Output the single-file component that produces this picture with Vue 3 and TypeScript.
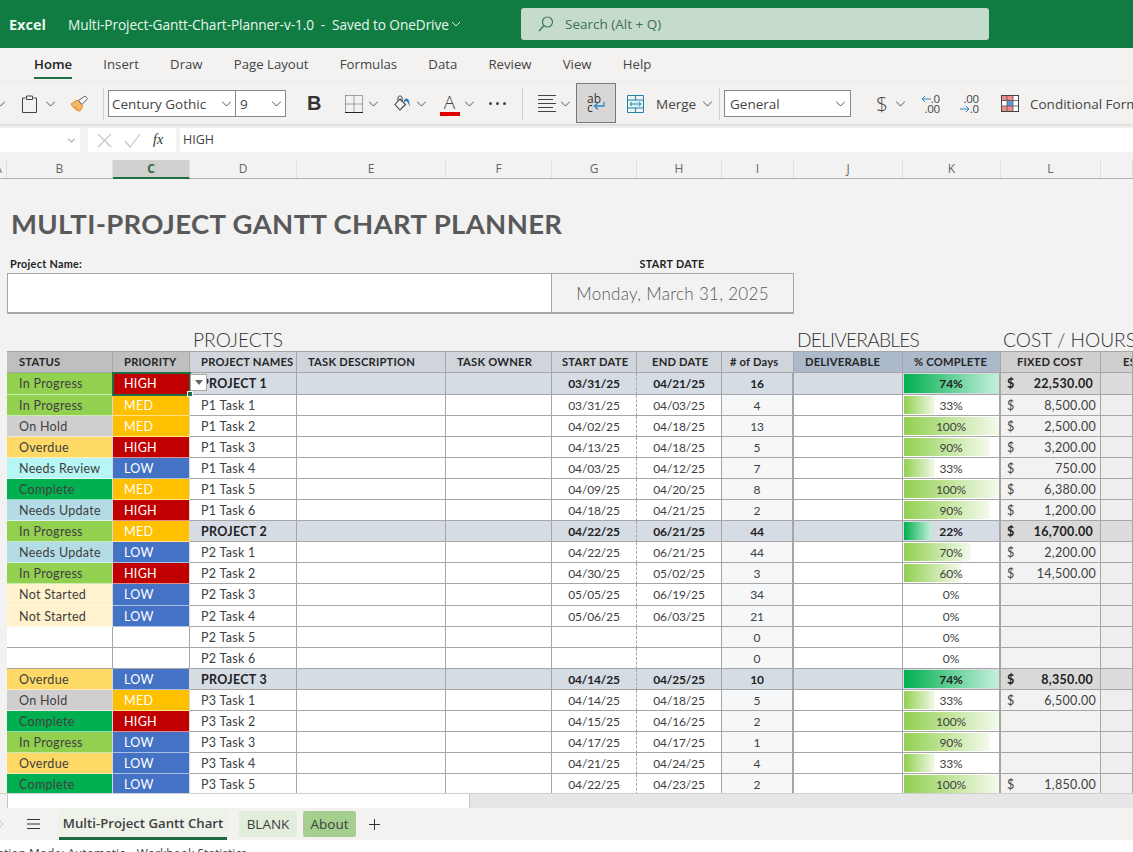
<script setup lang="ts">
interface Row {
  status: string
  priority: string
  name: string
  start: string
  end: string
  days: string
  pct: number
  cost: string
  project?: boolean
}

const r = (
  status: string,
  priority: string,
  name: string,
  start: string,
  end: string,
  days: string,
  pct: number,
  cost: string,
  project = false,
): Row => ({ status, priority, name, start, end, days, pct, cost, project })

const rows: Row[] = [
  r('In Progress', 'HIGH', 'PROJECT 1', '03/31/25', '04/21/25', '16', 74, '22,530.00', true),
  r('In Progress', 'MED', 'P1 Task 1', '03/31/25', '04/03/25', '4', 33, '8,500.00'),
  r('On Hold', 'MED', 'P1 Task 2', '04/02/25', '04/18/25', '13', 100, '2,500.00'),
  r('Overdue', 'HIGH', 'P1 Task 3', '04/13/25', '04/18/25', '5', 90, '3,200.00'),
  r('Needs Review', 'LOW', 'P1 Task 4', '04/03/25', '04/12/25', '7', 33, '750.00'),
  r('Complete', 'MED', 'P1 Task 5', '04/09/25', '04/20/25', '8', 100, '6,380.00'),
  r('Needs Update', 'HIGH', 'P1 Task 6', '04/18/25', '04/21/25', '2', 90, '1,200.00'),
  r('In Progress', 'MED', 'PROJECT 2', '04/22/25', '06/21/25', '44', 22, '16,700.00', true),
  r('Needs Update', 'LOW', 'P2 Task 1', '04/22/25', '06/21/25', '44', 70, '2,200.00'),
  r('In Progress', 'HIGH', 'P2 Task 2', '04/30/25', '05/02/25', '3', 60, '14,500.00'),
  r('Not Started', 'LOW', 'P2 Task 3', '05/05/25', '06/19/25', '34', 0, ''),
  r('Not Started', 'LOW', 'P2 Task 4', '05/06/25', '06/03/25', '21', 0, ''),
  r('', '', 'P2 Task 5', '', '', '0', 0, ''),
  r('', '', 'P2 Task 6', '', '', '0', 0, ''),
  r('Overdue', 'LOW', 'PROJECT 3', '04/14/25', '04/25/25', '10', 74, '8,350.00', true),
  r('On Hold', 'MED', 'P3 Task 1', '04/14/25', '04/18/25', '5', 33, '6,500.00'),
  r('Complete', 'HIGH', 'P3 Task 2', '04/15/25', '04/16/25', '2', 100, ''),
  r('In Progress', 'LOW', 'P3 Task 3', '04/17/25', '04/17/25', '1', 90, ''),
  r('Overdue', 'LOW', 'P3 Task 4', '04/21/25', '04/24/25', '4', 33, ''),
  r('Complete', 'LOW', 'P3 Task 5', '04/22/25', '04/23/25', '2', 100, '1,850.00'),
]

const statusClass = (s: string) => (s ? 's-' + s.toLowerCase().replace(/\s+/g, '-') + ' filled' : '')
const prioClass = (p: string) => (p ? 'p-' + p.toLowerCase() + ' filled' : '')
const barSize = (row: Row) => {
  const w = row.project ? (row.pct === 22 ? 28 : 97) : row.pct * 0.97
  return { backgroundSize: `${w}% calc(100% - 3px)` }
}

const ribbon = ['Home', 'Insert', 'Draw', 'Page Layout', 'Formulas', 'Data', 'Review', 'View', 'Help']
const letters = ['B', 'C', 'D', 'E', 'F', 'G', 'H', 'I', 'J', 'K', 'L', '']
</script>

<template>
  <div class="app">
    <header class="titlebar">
      <span class="brand">Excel</span>
      <span class="file">Multi-Project-Gantt-Chart-Planner-v-1.0&nbsp; - &nbsp;Saved to OneDrive</span>
      <svg class="file-chev" width="10" height="6" viewBox="0 0 10 6"><path d="M1 1l4 4 4-4" fill="none" stroke="#dff0e6" stroke-width="1"/></svg>
      <div class="search">
        <svg width="18" height="18" viewBox="0 0 18 18"><circle cx="10.5" cy="7" r="5" fill="none" stroke="#3f7a58" stroke-width="1.2"/><path d="M7 10.5L2 16" stroke="#3f7a58" stroke-width="1.4"/></svg>
        <span>Search (Alt + Q)</span>
      </div>
    </header>

    <nav class="ribbon-tabs">
      <span v-for="t in ribbon" :key="t" class="rtab" :class="{ on: t === 'Home' }">{{ t }}</span>
    </nav>

    <div class="toolbar">
      <svg class="chev c-first" width="9" height="6" viewBox="0 0 9 6"><path d="M0 .5l4.500 4.500L9 .5" /></svg>
      <svg class="i-paste" width="16" height="18" viewBox="0 0 16 18"><path d="M3.500 3H.5v14.500h14V3H11.500M4.500 1h6v3.500h-6z" fill="none" stroke="#444" stroke-width="1"/></svg>
      <svg class="chev c-paste" width="9" height="6" viewBox="0 0 9 6"><path d="M0 .5l4.500 4.500L9 .5" /></svg>
      <svg class="i-brush" width="19" height="18" viewBox="0 0 19 18"><path d="M1 9l6-4 6 6-3 5c-3 0-7-3-9-7z" fill="#f4b766" stroke="#e08f2f"/><path d="M8.500 5.500l3.500 4 5.500-6-2.500-2.500z" fill="#f7f7f7" stroke="#666"/><path d="M5 11l3 4" stroke="#e08f2f"/></svg>
      <span class="sep s1"></span>
      <div class="combo font"><span class="combo-a">Century Gothic<svg class="chev" width="9" height="6" viewBox="0 0 9 6"><path d="M0 .5l4.500 4.500L9 .5" /></svg></span><span class="combo-b">9<svg class="chev" width="9" height="6" viewBox="0 0 9 6"><path d="M0 .5l4.500 4.500L9 .5" /></svg></span></div>
      <b class="bold">B</b>
      <svg class="i-borders" width="18" height="18" viewBox="0 0 18 18"><path d="M.5.5h17v17M.5.500v17M9 .5v17M.5 9h17" fill="none" stroke="#555" stroke-dasharray="1 1"/><path d="M0 17.500h18" stroke="#222"/></svg>
      <svg class="chev c-b" width="9" height="6" viewBox="0 0 9 6"><path d="M0 .5l4.500 4.500L9 .5" /></svg>
      <svg class="i-fill" width="17" height="17" viewBox="0 0 17 17"><path d="M6 4L1 9.500 6 15l5.500-5.500z" fill="none" stroke="#444" stroke-width="1.100"/><path d="M4 6V2.500C4 .5 8 .5 8 2.500V7" fill="none" stroke="#444"/><path d="M10 5c2-2 4-2 5 1l1 6-2-4c-1-2-2-2-4-1z" fill="#2b7cb8"/></svg>
      <svg class="chev c-f" width="9" height="6" viewBox="0 0 9 6"><path d="M0 .5l4.500 4.500L9 .5" /></svg>
      <span class="font-a"><span>A</span><i></i></span>
      <svg class="chev c-a" width="9" height="6" viewBox="0 0 9 6"><path d="M0 .5l4.500 4.500L9 .5" /></svg>
      <span class="dots"><i></i><i></i><i></i></span>
      <span class="sep s2"></span>
      <svg class="i-align" width="18" height="18" viewBox="0 0 18 18"><path d="M0 .5h18M0 4.500h15M0 8.500h18M0 12.500h15M0 16.500h18" fill="none" stroke="#444" stroke-width="1"/></svg>
      <svg class="chev c-al" width="9" height="6" viewBox="0 0 9 6"><path d="M0 .5l4.500 4.500L9 .5" /></svg>
      <div class="wrap-btn"><span class="abc">ab<br>c</span><svg width="12" height="9" viewBox="0 0 12 9"><path d="M11 0v4H2M5 1L1.500 4 5 7.500" fill="none" stroke="#2b88c8" stroke-width="1.300"/></svg></div>
      <svg class="i-merge" width="17" height="18" viewBox="0 0 17 18"><rect x=".5" y="5" width="16" height="8" fill="#dff1f6"/><path d="M.5.5h16v17H.5zM.5 5h16M.5 13h16M8.500.5V5M8.500 13v4.500" fill="none" stroke="#1e86a5"/><path d="M3 9h11M5 7L3 9l2 2M12 7l2 2-2 2" fill="none" stroke="#1e86a5"/></svg>
      <span class="merge">Merge</span>
      <svg class="chev c-m" width="9" height="6" viewBox="0 0 9 6"><path d="M0 .5l4.500 4.500L9 .5" /></svg>
      <span class="sep s3"></span>
      <div class="combo general"><span>General</span><svg class="chev" width="9" height="6" viewBox="0 0 9 6"><path d="M0 .5l4.500 4.500L9 .5" /></svg></div>
      <span class="dollar">$</span>
      <svg class="chev c-d" width="9" height="6" viewBox="0 0 9 6"><path d="M0 .5l4.500 4.500L9 .5" /></svg>
      <span class="dec d1"><span><svg width="10" height="8" viewBox="0 0 10 8"><path d="M10 4H1M4 1L1 4l3 3" fill="none" stroke="#2b88c8"/></svg>.0</span><span>.00</span></span>
      <span class="dec d2"><span>.00</span><span><svg width="10" height="8" viewBox="0 0 10 8"><path d="M0 4h9M6 1l3 3-3 3" fill="none" stroke="#2b88c8"/></svg>.0</span></span>
      <svg class="i-cond" width="18" height="17" viewBox="0 0 18 17"><rect x=".5" y=".5" width="17" height="16" fill="#fff" stroke="#444"/><rect x="1" y="1" width="11" height="5" fill="#f08a8a"/><rect x="6" y="6" width="6" height="5" fill="#5b9bd5"/><rect x="6" y="11" width="6" height="5" fill="#f08a8a"/><rect x="1" y="11" width="5" height="5" fill="#f08a8a"/><path d="M6 .5v16M12 .5v16M.5 5.500h17M.5 11h17" stroke="#555" stroke-width=".8" fill="none"/></svg>
      <span class="cond">Conditional Formatting</span>
    </div>

    <div class="formula">
      <div class="namebox"><svg class="chev" width="7" height="5" viewBox="0 0 9 6"><path d="M0 .5l4.500 4.500L9 .5" /></svg></div>
      <div class="fxbox">
        <svg width="15" height="15" viewBox="0 0 15 15"><path d="M1 1l13 13M14 1L1 14" stroke="#c8c6c4" stroke-width="1.200"/></svg>
        <svg width="17" height="15" viewBox="0 0 17 15"><path d="M1 8l5 6L16 1" fill="none" stroke="#c8c6c4" stroke-width="1.200"/></svg>
        <em>fx</em>
      </div>
      <div class="fbar">HIGH</div>
    </div>

    <div class="col-heads">
      <span class="corner">A</span>
      <span class="grid-cols letters">
        <span v-for="(l, i) in letters" :key="i" class="lt" :class="{ sel: l === 'C' }">{{ l }}</span>
      </span>
    </div>

    <main class="sheet">
      <h1 class="title">MULTI-PROJECT GANTT CHART PLANNER</h1>
      <div class="labels">
        <b>Project Name:</b>
        <b class="sd">START DATE</b>
      </div>
      <div class="projbox">
        <div class="pname"></div>
        <div class="pdate">Monday, March 31, 2025</div>
      </div>
      <div class="grid-cols sections">
        <span class="sec sec-a">PROJECTS</span>
        <span class="sec sec-b">DELIVERABLES</span>
        <span class="sec sec-c">COST / HOURS</span>
      </div>
      <div class="grid-cols head">
        <span class="hd gray pl12">STATUS</span>
        <span class="hd gray">PRIORITY</span>
        <span class="hd slate">PROJECT NAMES</span>
        <span class="hd slate">TASK DESCRIPTION</span>
        <span class="hd slate">TASK OWNER</span>
        <span class="hd slate pl10">START DATE</span>
        <span class="hd slate pl15">END DATE</span>
        <span class="hd slate pl8"># of Days</span>
        <span class="hd blue">DELIVERABLE</span>
        <span class="hd blue">% COMPLETE</span>
        <span class="hd lightgray pl16">FIXED COST</span>
        <span class="hd lightgray est">ESTIMATED</span>
      </div>
      <div v-for="(row, i) in rows" :key="i" class="grid-cols line" :class="{ proj: row.project, tall: i % 10 === 0 }">
        <span class="c status" :class="statusClass(row.status)">{{ row.status }}</span>
        <span class="c prio" :class="[prioClass(row.priority), { picked: i === 0 }]">
          {{ row.priority }}
          <span v-if="i === 0" class="handle"></span>
          <span v-if="i === 0" class="dropbtn"><i></i></span>
        </span>
        <span class="c name">{{ row.name }}</span>
        <span class="c"></span>
        <span class="c"></span>
        <span class="c ctr dashed">{{ row.start }}</span>
        <span class="c ctr">{{ row.end }}</span>
        <span class="c ctr days">{{ row.days }}</span>
        <span class="c"></span>
        <span class="c ctr pct" :style="barSize(row)">{{ row.pct }}%</span>
        <span class="c cost"><template v-if="row.cost"><span>$</span><span>{{ row.cost }}</span></template></span>
        <span class="c extra"></span>
      </div>
    </main>

    <div class="hscroll"><span class="lead"></span><span class="thumb"></span></div>

    <footer class="sheet-tabs">
      <svg class="prev" width="5" height="10" viewBox="0 0 5 10"><path d="M0 1l4 4-4 4" fill="none" stroke="#c8c6c4"/></svg>
      <svg class="burger" width="13" height="10" viewBox="0 0 13 10"><path d="M0 .5h13M0 5h13M0 9.500h13" stroke="#333"/></svg>
      <span class="tab active">Multi-Project Gantt Chart</span>
      <span class="tab blank">BLANK</span>
      <span class="tab about">About</span>
      <svg class="plus" width="11" height="11" viewBox="0 0 11 11"><path d="M5.500 0v11M0 5.500h11" stroke="#333"/></svg>
    </footer>
    <div class="status-bar"><span>Calculation Mode: Automatic</span><span>Workbook Statistics</span></div>
  </div>
</template>

<style>
html, body { margin: 0; background: #f3f2f1; }
</style>

<style scoped>
.app { width: 1133px; height: 852px; overflow: hidden; display: flex; flex-direction: column; background: #f2f2f2; font-family: "Open Sans", "Noto Sans", sans-serif; color: #333; }

/* title bar */
.titlebar { height: 48px; flex: none; background: #107c41; color: #eaf5ef; display: flex; align-items: center; }
.brand { margin-left: 9px; font-weight: 700; font-size: 14.500px; width: 59px; flex: none; }
.file { font-size: 13.700px; white-space: nowrap; letter-spacing: -.1px; width: 383px; flex: none; }
.file-chev { flex: none; }
.search { margin-left: 60px; width: 468px; flex: none; height: 32px; box-sizing: border-box; padding-left: 16px; background: #c5dccd; border-radius: 3px; display: flex; align-items: center; gap: 10px; color: #3f6e54; font-size: 13.500px; }

/* ribbon tabs */
.ribbon-tabs { height: 34px; flex: none; background: #f3f2f1; display: flex; padding-left: 34px; gap: 31.200px; font-size: 13.200px; color: #444; }
.rtab { line-height: 32px; height: 31px; box-sizing: border-box; white-space: nowrap; }
.rtab.on { color: #222; font-weight: 600; border-bottom: 2.500px solid #1e6f44; }

/* toolbar */
.toolbar { height: 42px; box-sizing: border-box; padding-top: 1px; flex: none; background: #f3f2f1; display: flex; align-items: center; box-shadow: 0 1px 3px rgba(0,0,0,.15); white-space: nowrap; position: relative; font-size: 13.500px; color: #444; }
.toolbar > * { flex: none; }
.chev { flex: none; fill: none; stroke: #555; stroke-width: 1; }
.c-first { margin-left: -4px; }
.i-paste { margin-left: 17px; }
.c-paste { margin-left: 8px; }
.i-brush { margin-left: 15px; }
.sep { width: 1px; height: 32px; background: #d0cfcd; }
.s1 { margin-left: 14px; }
.combo { box-sizing: border-box; height: 27px; border: 1px solid #8a8886; background: #fff; display: flex; align-items: center; font-size: 13.500px; }
.font { margin-left: 4px; width: 178px; }
.combo-a { width: 127px; box-sizing: border-box; padding: 0 4px 0 3px; border-right: 1px solid #8a8886; height: 100%; display: flex; align-items: center; justify-content: space-between; }
.combo-b { flex: 1; padding: 0 4px; display: flex; align-items: center; justify-content: space-between; }
.bold { margin-left: 21px; font-size: 20px; font-family: "Liberation Sans", sans-serif; color: #333; width: 15px; }
.i-borders { margin-left: 23px; }
.c-b { margin-left: 6px; }
.i-fill { margin-left: 16px; }
.c-f { margin-left: 6px; }
.font-a { margin-left: 13px; width: 21px; height: 24px; display: flex; flex-direction: column; align-items: center; font-size: 19px; line-height: 20px; font-weight: 300; }
.font-a i { width: 20px; height: 4px; background: #e00000; display: block; }
.c-a { margin-left: 5px; }
.dots { margin-left: 15px; display: flex; gap: 4px; }
.dots i { width: 3px; height: 3px; border-radius: 50%; background: #444; }
.s2 { margin-left: 16px; }
.i-align { margin-left: 15px; }
.c-al { margin-left: 5px; }
.wrap-btn { margin-left: 6px; width: 40px; height: 40px; margin-top: -1px; box-sizing: border-box; border: 1px solid #7a7876; background: #d9d7d5; display: flex; align-items: flex-end; justify-content: center; padding-bottom: 10px; }
.abc { font-size: 12px; line-height: 9px; text-align: left; color: #333; width: 13px; }
.wrap-btn svg { margin-bottom: 1px; margin-left: -7px; }
.i-merge { margin-left: 11px; }
.merge { margin-left: 12px; width: 41px; }
.c-m { margin-left: 6px; }
.s3 { margin-left: 7px; }
.general { margin-left: 4px; width: 127px; padding: 0 5px; justify-content: space-between; }
.dollar { margin-left: 25px; width: 11px; font-size: 21px; font-weight: 300; }
.c-d { margin-left: 9px; }
.dec { display: flex; flex-direction: column; font-size: 11.500px; line-height: 9.500px; text-align: right; color: #444; width: 20px; letter-spacing: -.2px; }
.dec svg { margin-right: 0; }
.d1 { margin-left: 15px; }
.d2 { margin-left: 19px; }
.i-cond { margin-left: 22px; }
.cond { margin-left: 11px; }

/* formula */
.formula { margin-top: 4px; height: 24px; flex: none; display: flex; gap: 8px; }
.namebox { width: 80px; background: #fff; display: flex; align-items: center; justify-content: flex-end; padding-right: 5px; box-sizing: border-box; }
.fxbox { width: 88px; margin-right: -4px; background: #fff; display: flex; align-items: center; gap: 12px; padding-left: 9px; box-sizing: border-box; }
.fxbox em { font-family: "Liberation Serif", serif; font-size: 14px; color: #333; }
.fbar { flex: 1; background: #fff; font-size: 12.500px; line-height: 24px; padding-left: 3px; color: #444; }

/* column letters */
.grid-cols { display: grid; grid-template-columns: 106px 77px 107px 149px 106px 85px 85px 72px 109px 98px 100px 1fr; }
.col-heads { margin-top: 8px; height: 19px; flex: none; display: flex; border-bottom: 1px solid #b5b3b1; box-sizing: border-box; }
.corner { width: 7px; font-size: 11px; line-height: 18px; overflow: hidden; color: #777; text-indent: -5px; flex: none; border-right: 1px solid #e1dfdd; box-sizing: border-box; }
.letters { flex: 1; }
.lt { font-size: 12px; line-height: 18px; text-align: center; color: #666; border-right: 1px solid #e1dfdd; }
.lt.sel { background: #d2d0ce; color: #1e6f44; font-weight: 700; box-shadow: 0 1px 0 #1e6f44, inset 0 -1px 0 #1e6f44; }

/* sheet */
.sheet { flex: 1; min-height: 0; overflow: hidden; padding-left: 7px; font-family: Lato, "Open Sans", sans-serif; letter-spacing: .3px; color: #404040; }
.title { margin: 27px 0 0 4px; font-size: 27.500px; line-height: 36px; font-weight: 700; color: #595959; white-space: nowrap; letter-spacing: .35px; }
.labels { margin-top: 15px; display: flex; font-size: 10.800px; line-height: 14px; color: #222; }
.labels b { margin-left: 3px; width: 541px; }
.labels .sd { width: 242px; margin: 0; text-align: center; }
.projbox { margin-top: 2px; width: 787px; height: 41px; box-sizing: border-box; border: 1px solid #a6a6a6; border-bottom-width: 2px; display: flex; }
.pname { width: 543px; background: #fff; border-right: 1px solid #a6a6a6; }
.pdate { flex: 1; text-align: center; font-size: 17px; line-height: 39px; font-weight: 300; color: #595959; }
.sections { margin-top: 13px; height: 24px; align-items: center; overflow: visible; }
.sec { font-size: 19.200px; font-weight: 300; color: #333; white-space: nowrap; letter-spacing: 0; }
.sec-a { grid-column: 3; padding-left: 3px; }
.sec-b { grid-column: 9; padding-left: 3px; letter-spacing: -.8px; }
.sec-c { grid-column: 11; padding-left: 2px; }

.head { height: 22px; }
.hd { font-size: 11.200px; font-weight: 700; line-height: 19px; padding-left: 11px; color: #262626; border: 1px solid #a6a6a6; border-width: 1px 1px 1px 0; white-space: nowrap; overflow: hidden; letter-spacing: .2px; }
.pl8 { padding-left: 8px; }
.pl10 { padding-left: 10px; }
.pl12 { padding-left: 12px; }
.pl15 { padding-left: 15px; }
.pl16 { padding-left: 16px; }
.hd.gray { background: #bfbfbf; }
.hd.slate { background: #d0d5dc; }
.hd.blue { background: #acb9ca; }
.hd.lightgray { background: #d0cece; }
.hd.est { padding-left: 22px; }

.line { height: 21px; }
.line.tall { height: 22px; }
.c { box-sizing: border-box; border-right: 1px solid #a6a6a6; border-bottom: 1px solid #a6a6a6; background: #fff; font-size: 12.500px; line-height: 19px; padding-top: 1px; white-space: nowrap; color: #404040; overflow: hidden; }
.status { padding-left: 12px; }
.status.filled { border-right-color: #d9d9d9; border-bottom-color: rgba(255,255,255,.55); }
.prio { padding-left: 11px; color: #fff; position: relative; overflow: visible; }
.prio.filled { border-right-color: #d9d9d9; border-bottom-color: rgba(255,255,255,.55); }
.name { padding-left: 11px; }
.ctr { text-align: center; font-size: 12px; letter-spacing: -.15px; }
.dashed { border-right: 1px dashed #a6a6a6; }
.days { background: #f5f7f9; border-right-width: 2px; }
.pct { background-color: #fff; background-image: linear-gradient(90deg, #92d050, #f4faec); background-repeat: no-repeat; background-origin: border-box; background-position: 1px 1px; border-right-width: 2px; }
.cost { background: #f2f2f2; display: flex; justify-content: space-between; padding: 1px 4px 0 6px; }
.extra { background: #eeeeee; }

.line.proj .c { background-color: #d6dce4; font-weight: 700; color: #222; }
.line.proj .prio { color: #fff; font-weight: 400; }
.line.proj .status { font-weight: 400; color: #404040; }
.line.proj .pct { background-color: #d6dce4; background-image: linear-gradient(90deg, #00b050, #c6f0dc); }
.line.proj .cost { background-color: #d9d9d9; padding-right: 7px; }
.line.proj .extra { background-color: #dcdcdc; }

.s-in-progress { background: #92d050; }
.s-on-hold { background: #d0cece; }
.s-overdue { background: #ffd966; }
.s-needs-review { background: #b6f6f4; }
.s-complete { background: #00b050; }
.s-needs-update { background: #b4dce6; }
.s-not-started { background: #fff2cc; }
.line.proj .s-in-progress { background-color: #92d050; }
.line.proj .s-overdue { background-color: #ffd966; }
.p-high, .line.proj .p-high { background-color: #c00000; }
.p-med, .line.proj .p-med { background-color: #ffc000; }
.p-low, .line.proj .p-low { background-color: #4472c4; }
.picked { outline: 2px solid #1e6f44; outline-offset: -1px; z-index: 2; }
.handle { position: absolute; right: -4px; bottom: -3px; width: 6px; height: 6px; background: #1e6f44; border: 1px solid #fff; box-sizing: border-box; }
.dropbtn { position: absolute; left: 77px; top: 1px; width: 17px; height: 17px; background: #fff; border: 1px solid #a6a6a6; box-sizing: border-box; display: flex; align-items: center; justify-content: center; }
.dropbtn i { width: 0; height: 0; border: 4px solid transparent; border-top: 5px solid #666; border-bottom: 0; }

/* bottom */
.hscroll { height: 15px; flex: none; display: flex; background: #e6e6e6; border-top: 1px solid #d0d0d0; box-sizing: border-box; }
.lead { width: 7px; background: #f2f2f2; }
.thumb { width: 463px; background: #fff; border: 1px solid #c8c6c4; border-width: 0 1px; box-sizing: border-box; }
.sheet-tabs { height: 32px; flex: none; background: #f3f2f1; display: flex; align-items: center; font-family: "Open Sans", sans-serif; position: relative; font-size: 13.500px; color: #404040; }
.prev { margin-left: -1px; }
.burger { margin-left: 23px; }
.tab { box-sizing: border-box; white-space: nowrap; }
.active { margin-left: 19px; width: 168px; height: 32px; line-height: 30px; text-align: center; font-weight: 600; font-size: 13.200px; background: #eef3ea; border-bottom: 3px solid #1e6b41; }
.blank { margin-left: 12px; width: 58px; height: 26px; line-height: 26px; text-align: center; background: #e2eedb; border-radius: 2px; }
.about { margin-left: 6px; width: 53px; height: 26px; line-height: 26px; text-align: center; background: #a4cf8e; border-radius: 2px; }
.plus { margin-left: 13px; }
.status-bar { height: 12px; flex: none; background: #fff; padding-top: 6px; box-sizing: border-box; overflow: hidden; font-size: 12px; line-height: 16px; color: #444; margin-left: -36px; display: flex; gap: 12px; white-space: nowrap; }
</style>
